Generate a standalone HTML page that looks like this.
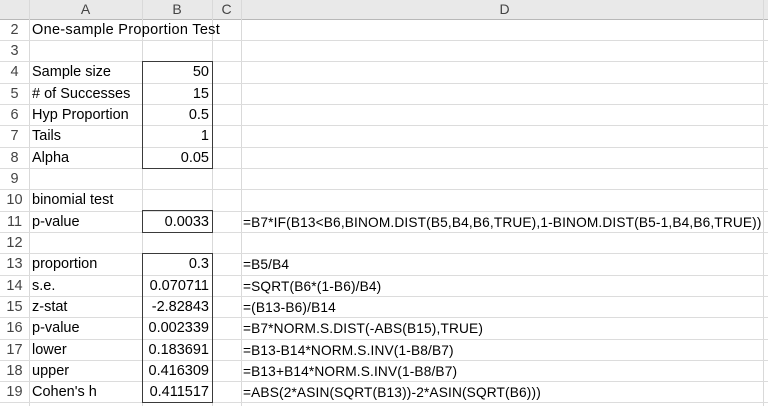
<!DOCTYPE html>
<html><head><meta charset="utf-8"><style>
body{margin:0;width:768px;height:406px;overflow:hidden;background:#fff;font-family:"Liberation Sans",sans-serif;font-size:14.5px;color:#000;position:relative}
.h{position:absolute;top:0;height:19px;background:#e9e9e9;border-bottom:1px solid #b8b8b8;color:#444;text-align:center;line-height:19px;font-size:14px}
.v{position:absolute;top:0;width:1px;height:406px;background:#d9d9d9}
.r{position:absolute;left:0;width:768px;height:1px;background:#dcdcdc}
.n{position:absolute;left:0;width:29px;text-align:center;color:#444;line-height:21px;font-size:14.5px}
.t{position:absolute;line-height:21px;white-space:nowrap}
.b{position:absolute;border:1px solid #3a3a3a}
.f{font-size:13.7px;letter-spacing:0.15px}
</style></head><body>
<div class="h" style="left:0;width:29px"></div>
<div class="h" style="left:29px;width:113px">A</div>
<div class="h" style="left:142px;width:70px">B</div>
<div class="h" style="left:212px;width:29px">C</div>
<div class="h" style="left:241px;width:527px">D</div>
<div class="v" style="left:29px"></div>
<div class="v" style="left:142px"></div>
<div class="v" style="left:212px"></div>
<div class="v" style="left:241px"></div>
<div class="v" style="left:763px"></div>

<div class="r" style="top:40px"></div><div class="r" style="top:61px"></div><div class="r" style="top:83px"></div><div class="r" style="top:104px"></div><div class="r" style="top:125px"></div><div class="r" style="top:147px"></div><div class="r" style="top:168px"></div><div class="r" style="top:189px"></div><div class="r" style="top:211px"></div><div class="r" style="top:232px"></div><div class="r" style="top:253px"></div><div class="r" style="top:275px"></div><div class="r" style="top:296px"></div><div class="r" style="top:317px"></div><div class="r" style="top:339px"></div><div class="r" style="top:360px"></div><div class="r" style="top:381px"></div><div class="r" style="top:402px"></div>

<div class="n" style="top:20px">2</div><div class="n" style="top:41px">3</div><div class="n" style="top:62px">4</div><div class="n" style="top:84px">5</div><div class="n" style="top:105px">6</div><div class="n" style="top:126px">7</div><div class="n" style="top:148px">8</div><div class="n" style="top:169px">9</div><div class="n" style="top:190px">10</div><div class="n" style="top:212px">11</div><div class="n" style="top:233px">12</div><div class="n" style="top:254px">13</div><div class="n" style="top:276px">14</div><div class="n" style="top:297px">15</div><div class="n" style="top:318px">16</div><div class="n" style="top:340px">17</div><div class="n" style="top:361px">18</div><div class="n" style="top:382px">19</div>

<div class="b" style="left:142px;top:61px;width:69px;height:106px"></div>
<div class="b" style="left:142px;top:210px;width:69px;height:21px"></div>
<div class="b" style="left:142px;top:253px;width:69px;height:148px"></div>

<div class="t" style="left:32px;top:20px;letter-spacing:0.3px">One-sample Proportion Test</div>
<div class="t" style="left:32px;top:62px">Sample size</div>
<div class="t" style="left:32px;top:84px"># of Successes</div>
<div class="t" style="left:32px;top:105px">Hyp Proportion</div>
<div class="t" style="left:32px;top:126px">Tails</div>
<div class="t" style="left:32px;top:148px">Alpha</div>
<div class="t" style="left:32px;top:190px">binomial test</div>
<div class="t" style="left:32px;top:212px">p-value</div>
<div class="t" style="left:32px;top:254px">proportion</div>
<div class="t" style="left:32px;top:276px">s.e.</div>
<div class="t" style="left:32px;top:297px">z-stat</div>
<div class="t" style="left:32px;top:318px">p-value</div>
<div class="t" style="left:32px;top:340px">lower</div>
<div class="t" style="left:32px;top:361px">upper</div>
<div class="t" style="left:32px;top:382px">Cohen's h</div>

<div class="t" style="right:559px;top:62px">50</div>
<div class="t" style="right:559px;top:84px">15</div>
<div class="t" style="right:559px;top:105px">0.5</div>
<div class="t" style="right:559px;top:126px">1</div>
<div class="t" style="right:559px;top:148px">0.05</div>
<div class="t" style="right:559px;top:212px">0.0033</div>
<div class="t" style="right:559px;top:254px">0.3</div>
<div class="t" style="right:559px;top:276px">0.070711</div>
<div class="t" style="right:559px;top:297px">-2.82843</div>
<div class="t" style="right:559px;top:318px">0.002339</div>
<div class="t" style="right:559px;top:340px">0.183691</div>
<div class="t" style="right:559px;top:361px">0.416309</div>
<div class="t" style="right:559px;top:382px">0.411517</div>

<div class="t f" style="left:243px;top:212px">=B7*IF(B13&lt;B6,BINOM.DIST(B5,B4,B6,TRUE),1-BINOM.DIST(B5-1,B4,B6,TRUE))</div>
<div class="t f" style="left:243px;top:254px">=B5/B4</div>
<div class="t f" style="left:243px;top:276px">=SQRT(B6*(1-B6)/B4)</div>
<div class="t f" style="left:243px;top:297px">=(B13-B6)/B14</div>
<div class="t f" style="left:243px;top:318px">=B7*NORM.S.DIST(-ABS(B15),TRUE)</div>
<div class="t f" style="left:243px;top:340px">=B13-B14*NORM.S.INV(1-B8/B7)</div>
<div class="t f" style="left:243px;top:361px">=B13+B14*NORM.S.INV(1-B8/B7)</div>
<div class="t f" style="left:243px;top:382px">=ABS(2*ASIN(SQRT(B13))-2*ASIN(SQRT(B6)))</div>
</body></html>
